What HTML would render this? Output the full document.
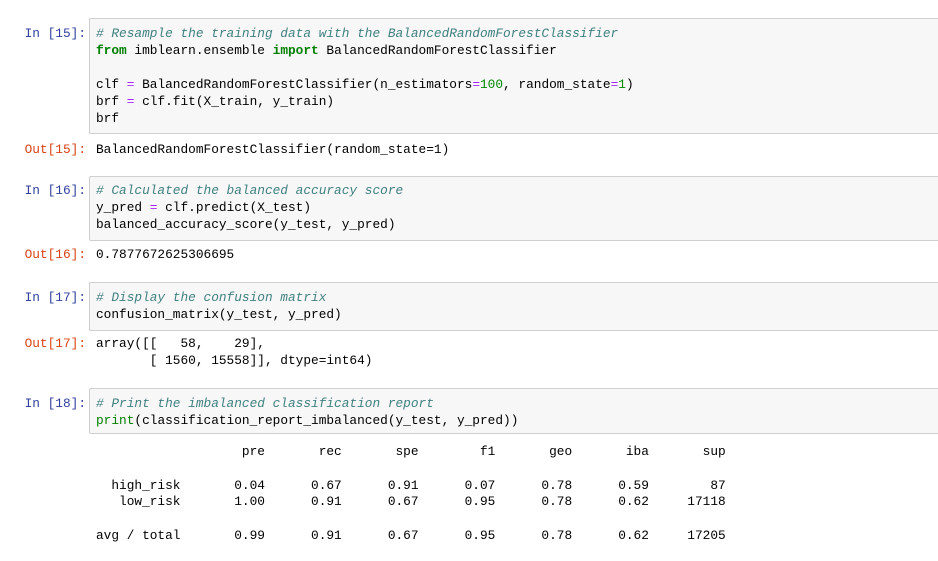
<!DOCTYPE html>
<html><head><meta charset="utf-8"><style>
body{margin:0;width:938px;height:561px;background:#fff;position:relative;overflow:hidden;font-family:"Liberation Mono",monospace;font-size:12.8px;color:#000}
.box{position:absolute;left:89px;width:860px;background:#f7f7f7;border:1px solid #cfcfcf;border-radius:2px;box-sizing:border-box}
.l{position:absolute;left:96px;height:17px;line-height:17px;white-space:pre}
.p{position:absolute;right:852px;height:17px;line-height:17px;white-space:pre;color:#303f9f;text-align:right}
.o{color:#d84315}
.c{color:#408080;font-style:italic}
.k{color:#008000;font-weight:bold}
.b{color:#008000}
.n{color:#080}
.op{color:#aa22ff}
</style></head><body>
<div class="box" style="top:18px;height:116px"></div>
<div class="box" style="top:176px;height:65px"></div>
<div class="box" style="top:282px;height:49px"></div>
<div class="box" style="top:388px;height:46px"></div>

<div class="p" style="top:25px">In [15]:</div>
<div class="l" style="top:25px"><span class="c"># Resample the training data with the BalancedRandomForestClassifier</span></div>
<div class="l" style="top:42px"><span class="k">from</span> imblearn.ensemble <span class="k">import</span> BalancedRandomForestClassifier</div>
<div class="l" style="top:76px">clf <span class="op">=</span> BalancedRandomForestClassifier(n_estimators<span class="op">=</span><span class="n">100</span>, random_state<span class="op">=</span><span class="n">1</span>)</div>
<div class="l" style="top:93px">brf <span class="op">=</span> clf.fit(X_train, y_train)</div>
<div class="l" style="top:110px">brf</div>
<div class="p o" style="top:141px">Out[15]:</div>
<div class="l" style="top:141px">BalancedRandomForestClassifier(random_state=1)</div>

<div class="p" style="top:182px">In [16]:</div>
<div class="l" style="top:182px"><span class="c"># Calculated the balanced accuracy score</span></div>
<div class="l" style="top:199px">y_pred <span class="op">=</span> clf.predict(X_test)</div>
<div class="l" style="top:216px">balanced_accuracy_score(y_test, y_pred)</div>
<div class="p o" style="top:246px">Out[16]:</div>
<div class="l" style="top:246px">0.7877672625306695</div>

<div class="p" style="top:289px">In [17]:</div>
<div class="l" style="top:289px"><span class="c"># Display the confusion matrix</span></div>
<div class="l" style="top:306px">confusion_matrix(y_test, y_pred)</div>
<div class="p o" style="top:335px">Out[17]:</div>
<div class="l" style="top:335px">array([[   58,    29],</div>
<div class="l" style="top:352px">       [ 1560, 15558]], dtype=int64)</div>

<div class="p" style="top:395px">In [18]:</div>
<div class="l" style="top:395px"><span class="c"># Print the imbalanced classification report</span></div>
<div class="l" style="top:412px"><span class="b">print</span>(classification_report_imbalanced(y_test, y_pred))</div>
<div class="l" style="top:443px">                   pre       rec       spe        f1       geo       iba       sup</div>
<div class="l" style="top:477px">  high_risk       0.04      0.67      0.91      0.07      0.78      0.59        87</div>
<div class="l" style="top:493px">   low_risk       1.00      0.91      0.67      0.95      0.78      0.62     17118</div>
<div class="l" style="top:527px">avg / total       0.99      0.91      0.67      0.95      0.78      0.62     17205</div>
</body></html>
